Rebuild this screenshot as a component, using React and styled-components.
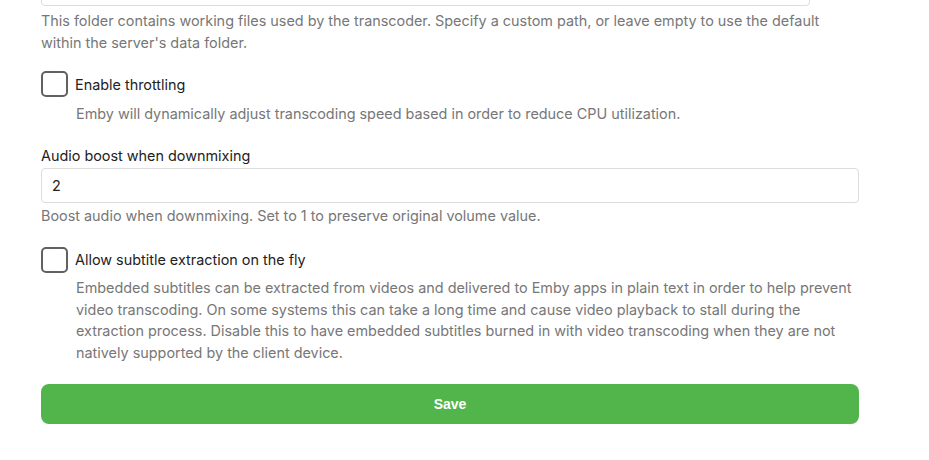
import styled, { createGlobalStyle } from "styled-components";

const GlobalStyle = createGlobalStyle`
  html, body {
    margin: 0;
    padding: 0;
    background: #fff;
    font-family: Inter, "Noto Sans", sans-serif;
    overflow: hidden;
  }
`;

const Form = styled.form`
  margin: -29px 0 0 41px;
  width: 818px;
  display: flex;
  flex-direction: column;
`;

const Field = styled.div`
  display: flex;
  flex-direction: column;
  margin-bottom: ${({ $gap }) => $gap || 0}px;
`;

const InputRow = styled.div`
  display: flex;
  padding-right: ${({ $inset }) => $inset || 0}px;
`;

const TextInput = styled.input`
  box-sizing: border-box;
  width: 100%;
  height: 35px;
  flex-shrink: 0;
  border: 1px solid #dcdcdc;
  border-radius: 4px;
  padding: 0 10px;
  font-family: inherit;
  font-size: 14.4px;
  color: #222;
  background: #fff;
  outline: none;
`;

const Label = styled.label`
  font-size: 14.4px;
  line-height: 21px;
  color: #222;
  margin-bottom: 2px;
`;

const Description = styled.div`
  font-size: 14.4px;
  line-height: 21.7px;
  color: #777;
  padding-top: ${({ $top }) => $top || 0}px;
  padding-left: ${({ $indent }) => $indent || 0}px;
`;

const CheckRow = styled.label`
  display: flex;
  align-items: center;
  gap: 7px;
  cursor: pointer;
`;

const Box = styled.span`
  box-sizing: border-box;
  width: 27px;
  height: 26px;
  border: 2px solid #616161;
  border-radius: 5px;
`;

const CheckText = styled.span`
  font-size: 14.4px;
  color: #222;
`;

const SaveButton = styled.button`
  height: 40px;
  border: none;
  border-radius: 8px;
  background: #52b54b;
  color: #fff;
  font-family: "Liberation Sans", Arial, sans-serif;
  font-weight: bold;
  font-size: 14px;
  cursor: pointer;
`;

function CheckField({ label, description, gap, top }) {
  return (
    <Field $gap={gap}>
      <CheckRow>
        <Box />
        <CheckText>{label}</CheckText>
      </CheckRow>
      <Description $indent={35} $top={top}>
        {description}
      </Description>
    </Field>
  );
}

export default function App() {
  return (
    <>
      <GlobalStyle />
      <Form onSubmit={(e) => e.preventDefault()}>
        <Field $gap={18}>
          <InputRow $inset={49}>
            <TextInput defaultValue="" />
          </InputRow>
          <Description $top={4}>
            This folder contains working files used by the transcoder. Specify a
            custom path, or leave empty to use the default within the server's
            data folder.
          </Description>
        </Field>

        <CheckField
          gap={20}
          top={6}
          label="Enable throttling"
          description="Emby will dynamically adjust transcoding speed based in order to reduce CPU utilization."
        />

        <Field $gap={20}>
          <Label>Audio boost when downmixing</Label>
          <TextInput defaultValue="2" />
          <Description $top={2}>
            Boost audio when downmixing. Set to 1 to preserve original volume
            value.
          </Description>
        </Field>

        <CheckField
          gap={20}
          top={4}
          label="Allow subtitle extraction on the fly"
          description="Embedded subtitles can be extracted from videos and delivered to Emby apps in plain text in order to help prevent video transcoding. On some systems this can take a long time and cause video playback to stall during the extraction process. Disable this to have embedded subtitles burned in with video transcoding when they are not natively supported by the client device."
        />

        <SaveButton type="submit">Save</SaveButton>
      </Form>
    </>
  );
}
